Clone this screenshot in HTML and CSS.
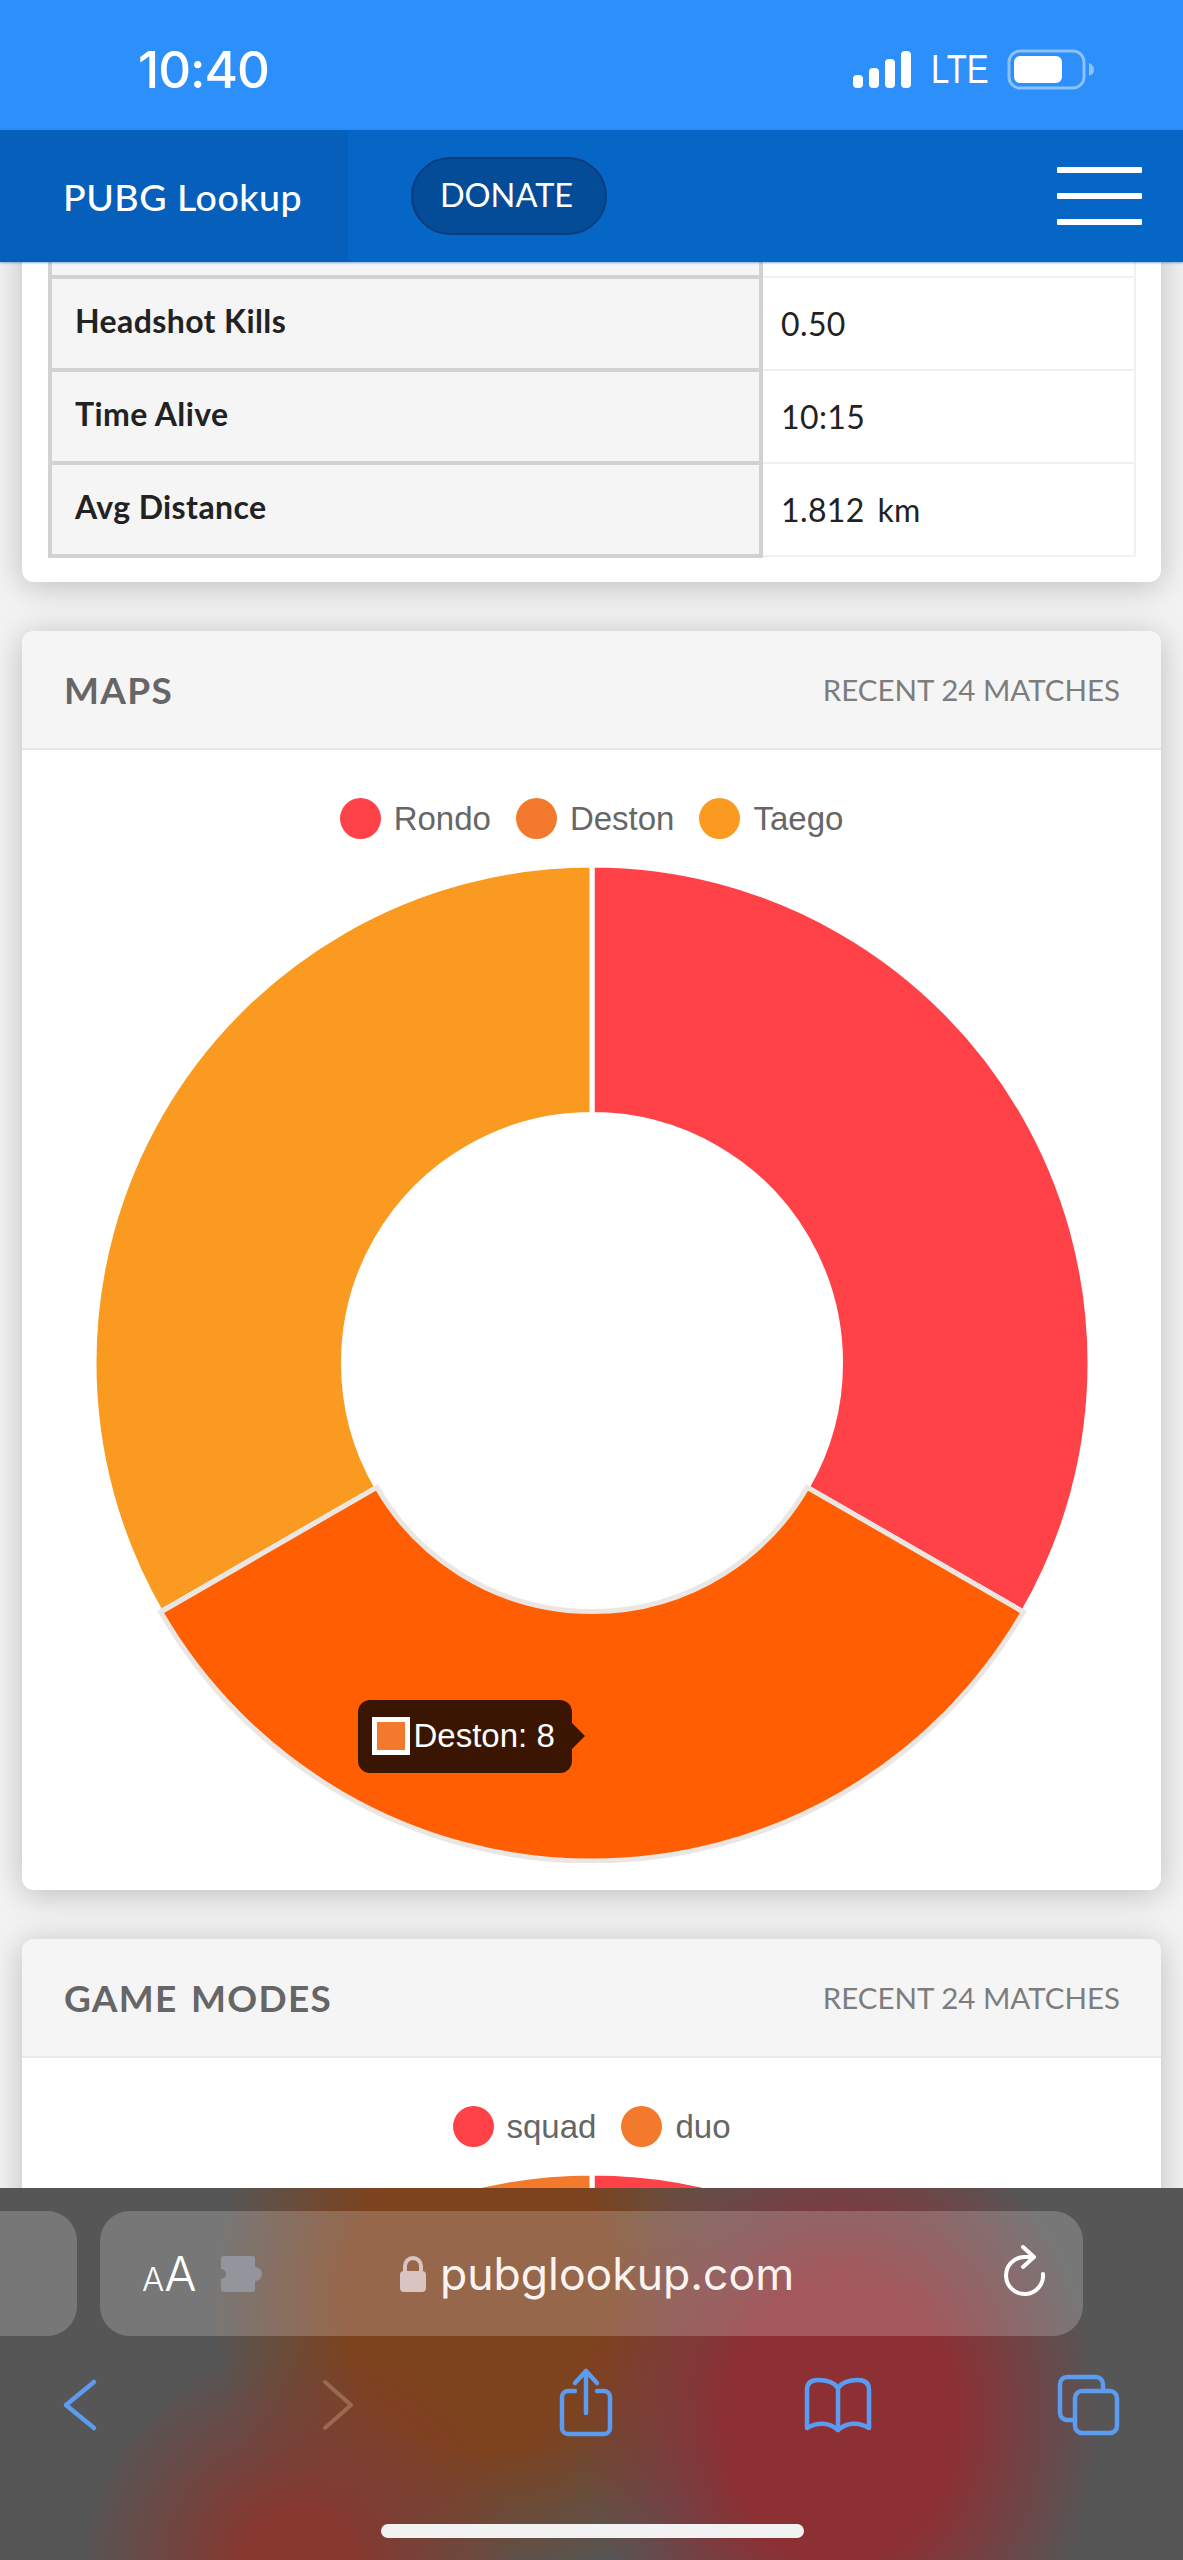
FILE: index.html
```html
<!DOCTYPE html>
<html lang="en">
  <head>
    <meta charset="UTF-8" />
    <meta name="viewport" content="width=device-width, initial-scale=1.0" />
    <title>PUBG Lookup</title>
    <link rel="stylesheet" href="styles.css">
  </head>
  <body>
    <div class="status-bar">
      <span class="clock">10:40</span>
      <div class="status-right">
        <svg class="signal" width="62" height="40" viewBox="0 0 62 40">
          <rect x="2" y="25" width="10" height="13" rx="4" />
          <rect x="18" y="18" width="10" height="20" rx="4" />
          <rect x="34" y="9" width="10" height="29" rx="4" />
          <rect x="50" y="1" width="10" height="37" rx="4" />
        </svg>
        <span class="lte">LTE</span>
        <svg class="battery" width="88" height="42" viewBox="0 0 88 42">
          <rect class="battery-line" x="2" y="2" width="75" height="37" rx="11" />
          <rect class="battery-fill" x="7" y="7" width="48" height="27" rx="6" />
          <path class="battery-cap" d="M82 14 C85 15 87 18 87 21 C87 24 85 26 82 27 Z" />
        </svg>
      </div>
    </div>

    <nav class="navbar">
      <a class="brand">PUBG Lookup</a>
      <a class="donate">DONATE</a>
      <div class="burger"><span></span><span></span><span></span></div>
    </nav>

    <main class="content">
      <section class="card stats-card">
        <table class="stats">
          <tr><th></th><td></td></tr>
          <tr><th>Headshot Kills</th><td>0.50</td></tr>
          <tr><th>Time Alive</th><td>10:15</td></tr>
          <tr><th>Avg Distance</th><td>1.812 km</td></tr>
        </table>
      </section>

      <section class="card">
        <header class="card-head">
          <h2>MAPS</h2>
          <span class="recent">RECENT 24 MATCHES</span>
        </header>
        <div class="card-body">
          <ul class="legend">
            <li><i class="dot red"></i>Rondo</li>
            <li><i class="dot orange"></i>Deston</li>
            <li><i class="dot amber"></i>Taego</li>
          </ul>
          <div class="chart">
            <svg width="1000" height="1000" viewBox="-500 -500 1000 1000">
              <path fill="#fe4248" stroke="#fff" stroke-width="5" d="M0 -498 A498 498 0 0 1 431.3 249 L215.2 124.3 A248.500 248.500 0 0 0 0 -248.500 Z" />
              <path fill="#fa9a21" stroke="#fff" stroke-width="5" d="M-431.300 249 A498 498 0 0 1 0 -498 L0 -248.500 A248.500 248.500 0 0 0 -215.200 124.300 Z" />
              <path fill="#ff5e03" stroke="#ebe6e2" stroke-width="5" d="M431.300 249 A498 498 0 0 1 -431.300 249 L-215.200 124.300 A248.500 248.500 0 0 0 215.200 124.300 Z" />
            </svg>
            <div class="tooltip">
              <i class="swatch"></i>
              <span>Deston: 8</span>
            </div>
          </div>
        </div>
      </section>

      <section class="card">
        <header class="card-head">
          <h2>GAME MODES</h2>
          <span class="recent">RECENT 24 MATCHES</span>
        </header>
        <div class="card-body">
          <ul class="legend">
            <li><i class="dot red"></i>squad</li>
            <li><i class="dot orange"></i>duo</li>
          </ul>
          <div class="chart">
            <svg width="1000" height="1000" viewBox="-500 -500 1000 1000">
              <path fill="#fe4248" stroke="#fff" stroke-width="5" d="M0 -498 A498 498 0 0 1 498 0 L248.500 0 A248.500 248.500 0 0 0 0 -248.500 Z" />
              <path fill="#f37a2c" stroke="#fff" stroke-width="5" d="M-498 0 A498 498 0 0 1 0 -498 L0 -248.500 A248.500 248.500 0 0 0 -248.500 0 Z" />
            </svg>
          </div>
        </div>
      </section>
    </main>

    <div class="safari">
      <div class="url-row">
        <div class="tab-stub"></div>
        <div class="url-pill">
          <span class="aa"><small>A</small>A</span>
          <svg class="puzzle" width="46" height="38" viewBox="0 0 46 38">
            <path d="M4 1 H32 a3 3 0 0 1 3 3 V12 a7 7 0 0 1 0 14 V34 a3 3 0 0 1 -3 3 H4 a3 3 0 0 1 -3 -3 V24 a5 5 0 0 0 0 -10 V4 a3 3 0 0 1 3 -3 Z" />
          </svg>
          <div class="address">
            <svg class="lock" width="26" height="38" viewBox="0 0 26 38">
              <path class="shackle" d="M5 17 V11 a8 8 0 0 1 16 0 V17" />
              <rect class="lock-body" x="0" y="16" width="26" height="21" rx="4" />
            </svg>
            <span>pubglookup.com</span>
          </div>
          <svg class="reload" width="48" height="56" viewBox="0 0 48 56">
            <path d="M42 29 A18.500 18.500 0 1 1 23 12 H30" />
            <path d="M22 2 L33 12 L22 22" />
          </svg>
        </div>
      </div>
      <div class="toolbar">
        <svg class="tool" width="80" height="80" viewBox="0 0 80 80"><path d="M54 18 L26 41 L54 64" /></svg>
        <svg class="tool dim" width="80" height="80" viewBox="0 0 80 80"><path d="M33 18 L59 41 L33 64" /></svg>
        <svg class="tool" width="80" height="80" viewBox="0 0 80 80">
          <path d="M31 27 H24 a6 6 0 0 0 -6 6 V64 a6 6 0 0 0 6 6 H60 a6 6 0 0 0 6 -6 V33 a6 6 0 0 0 -6 -6 H53" />
          <path d="M42 49 V7 M31 19 L42 7 L53 19" />
        </svg>
        <svg class="tool" width="80" height="80" viewBox="0 0 80 80">
          <path d="M42 24 V66" />
          <path d="M42 24 C38 18 30 16 22 16 C15 16 11 19 11 26 V64 C22 57 34 59 42 66 C50 59 62 57 73 64 V26 C73 19 69 16 62 16 C54 16 46 18 42 24" />
        </svg>
        <svg class="tool" width="80" height="80" viewBox="0 0 80 80">
          <rect x="27" y="27" width="42" height="42" rx="7" />
          <path d="M55 27 V20 a7 7 0 0 0 -7 -7 H19 a7 7 0 0 0 -7 7 V49 a7 7 0 0 0 7 7 H27" />
        </svg>
      </div>
      <div class="home-bar"></div>
    </div>
  </body>
</html>
```

FILE: styles.css
```css
* {
  margin: 0;
  padding: 0;
  box-sizing: border-box;
}

html,
body {
  height: 2560px;
  overflow: hidden;
}

body {
  position: relative;
  display: flex;
  flex-direction: column;
  background-color: #f2f2f2;
  font-family: Lato, 'Open Sans', sans-serif;
}

/* phone status bar */
.status-bar {
  height: 130px;
  flex: none;
  display: flex;
  align-items: center;
  justify-content: space-between;
  padding: 9px 88px 0 138px;
  background-color: #2d8ff9;
  color: #fff;
}

.clock {
  font-family: Inter, sans-serif;
  font-size: 51px;
  font-weight: 500;
  letter-spacing: -1px;
}

.status-right {
  display: flex;
  align-items: center;
}

.signal {
  margin-right: 18px;
  fill: #fff;
}

.lte {
  width: 58px;
  margin-right: 18px;
  font-family: 'Liberation Sans', sans-serif;
  font-size: 40px;
  transform: scaleX(0.82);
  transform-origin: left center;
}

.battery-line {
  fill: none;
  stroke: rgba(255, 255, 255, 0.45);
  stroke-width: 3;
}

.battery-fill {
  fill: #fff;
}

.battery-cap {
  fill: rgba(255, 255, 255, 0.45);
}

/* site nav */
.navbar {
  height: 132px;
  flex: none;
  position: relative;
  z-index: 2;
  display: flex;
  align-items: center;
  padding-right: 41px;
  background-color: #0566c5;
  box-shadow: 0 1px 2px rgba(5, 102, 197, 0.5);
  color: #fff;
}

.brand {
  width: 348px;
  height: 100%;
  display: flex;
  align-items: center;
  padding-left: 63px;
  background-color: #055fbb;
  font-size: 37.5px;
  font-weight: 500;
  letter-spacing: 0.5px;
}

.donate {
  width: 196px;
  height: 78px;
  margin-left: 63px;
  padding: 0 5px 4px 0;
  display: flex;
  align-items: center;
  justify-content: center;
  border: 2px solid #0a3d7d;
  border-radius: 39px;
  background-color: #054c98;
  font-size: 32.5px;
}

.burger {
  margin-left: auto;
  display: flex;
  flex-direction: column;
  gap: 20px;
}

.burger span {
  display: block;
  width: 85px;
  height: 6px;
  border-radius: 1px;
  background-color: #fff;
}

/* cards */
.content {
  flex: 1;
  min-height: 0;
  overflow: hidden;
  padding: 0 22px;
}

.card {
  margin-bottom: 49px;
  border-radius: 12px;
  background-color: #fff;
  box-shadow: 0 4px 32px rgba(0, 0, 0, 0.22);
}

.stats-card {
  margin-top: -80px;
  padding: 0 25px 24px 26px;
}

.stats {
  width: 100%;
  border-collapse: collapse;
  table-layout: fixed;
}

.stats tr {
  height: 93px;
}

.stats th,
.stats td {
  text-align: left;
  font-size: 32px;
  color: #222;
}

.stats th {
  width: 711px;
  padding: 0 0 5px 23px;
  border: 4px solid #d2d2d2;
  border-top-width: 3px;
  background-color: #f5f5f5;
  font-weight: 700;
  letter-spacing: 0.4px;
}

.stats td {
  padding-left: 18px;
  border: 2px solid #f0f0f0;
  letter-spacing: 0.4px;
  word-spacing: 4px;
}

.card-head {
  height: 119px;
  display: flex;
  align-items: center;
  justify-content: space-between;
  padding: 0 41px 0 42px;
  border-bottom: 2px solid #e8e8e8;
  border-radius: 12px 12px 0 0;
  background-color: #f5f5f5;
  color: #666;
}

.card-head h2 {
  font-size: 37px;
  font-weight: 700;
  letter-spacing: 1.3px;
  word-spacing: 3px;
}

.recent {
  font-size: 29.5px;
  color: #7d7d7d;
}

.card-body {
  padding: 47px 0 27px;
}

.legend {
  height: 44px;
  display: flex;
  align-items: center;
  justify-content: center;
  gap: 25px;
  list-style: none;
  font-family: 'Liberation Sans', Arial, sans-serif;
  font-size: 33px;
  color: #666;
}

.legend li {
  display: flex;
  align-items: center;
  gap: 13px;
}

.dot {
  width: 41px;
  height: 41px;
  border-radius: 50%;
}

.red {
  background-color: #fe4248;
}

.orange {
  background-color: #f37a2c;
}

.amber {
  background-color: #fa9a21;
}

.chart {
  position: relative;
  width: 1000px;
  height: 1000px;
  margin: 22px auto 0;
}

.chart svg {
  display: block;
}

.tooltip {
  position: absolute;
  left: 266px;
  top: 837px;
  width: 214px;
  height: 73px;
  display: flex;
  align-items: center;
  gap: 4px;
  padding-left: 14px;
  border-radius: 12px;
  background-color: #3a1602;
  font-family: 'Liberation Sans', Arial, sans-serif;
  font-size: 33px;
  color: #fff;
}

.tooltip::after {
  content: '';
  position: absolute;
  left: 100%;
  top: 50%;
  margin-top: -13px;
  border-left: 13px solid #3a1602;
  border-top: 13px solid transparent;
  border-bottom: 13px solid transparent;
}

.swatch {
  width: 38px;
  height: 38px;
  border: 5px solid #fff;
  background-color: #f37a2c;
}

/* safari chrome lies over the page */
.safari {
  position: absolute;
  z-index: 3;
  left: 0;
  right: 0;
  bottom: 0;
  height: 372px;
  background-color: #565656;
  background-image:
    radial-gradient(ellipse 260px 320px at 840px 230px, #8c3034 45%, rgba(140, 48, 52, 0) 100%),
    radial-gradient(ellipse 220px 220px at 300px 380px, #87372e 25%, rgba(135, 55, 46, 0) 100%),
    radial-gradient(ellipse 270px 300px at 480px 110px, #7d421e 50%, rgba(125, 66, 30, 0) 100%);
  color: #fff;
}

.url-row {
  display: flex;
  gap: 23px;
  padding-top: 23px;
}

.tab-stub {
  width: 77px;
  height: 125px;
  flex: none;
  border-radius: 0 30px 30px 0;
  background-color: rgba(255, 255, 255, 0.2);
}

.url-pill {
  position: relative;
  width: 983px;
  height: 125px;
  display: flex;
  align-items: center;
  padding-left: 42px;
  border-radius: 30px;
  background-color: rgba(255, 255, 255, 0.2);
}

.aa {
  width: 78px;
  font-family: Inter, sans-serif;
  font-size: 48px;
  font-weight: 300;
}

.aa small {
  font-size: 33px;
}

.puzzle {
  fill: #94949c;
}

.address {
  margin-left: 134px;
  display: flex;
  align-items: center;
  gap: 14px;
  font-family: Inter, sans-serif;
  font-size: 44.5px;
  color: #fbf3f0;
}

.lock-body {
  fill: #d8c4c0;
}

.shackle {
  fill: none;
  stroke: #d8c4c0;
  stroke-width: 4;
}

.reload {
  position: absolute;
  right: 34px;
  top: 34px;
  fill: none;
  stroke: #fff;
  stroke-width: 4;
  stroke-linecap: round;
  stroke-linejoin: round;
}

.toolbar {
  display: flex;
  gap: 172px;
  padding: 28px 0 0 40px;
}

.tool {
  flex: none;
  fill: none;
  stroke: #5b9bf0;
  stroke-width: 4.5;
  stroke-linecap: round;
  stroke-linejoin: round;
}

.tool.dim {
  stroke: #9a6a50;
  stroke-width: 4;
}

.home-bar {
  position: absolute;
  left: 381px;
  bottom: 22px;
  width: 423px;
  height: 14px;
  border-radius: 7px;
  background-color: #f2f2f2;
}
```
